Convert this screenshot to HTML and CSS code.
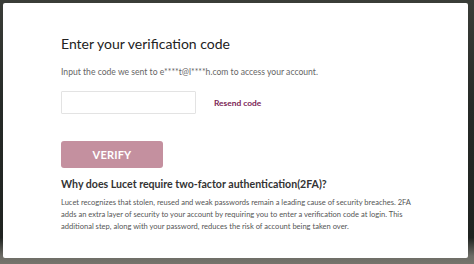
FILE: index.html
```html
<!DOCTYPE html>
<html>
<head>
<meta charset="utf-8">
<link rel="stylesheet" href="styles.css">
</head>
<body>
<div class="backdrop">
  <div class="modal">
    <h1 class="title">Enter your verification code</h1>
    <p class="sub">Input the code we sent to e****t@l****h.com to access your account.</p>
    <div class="row">
      <input class="code" type="text">
      <a class="resend">Resend code</a>
    </div>
    <button class="verify">VERIFY</button>
    <h2 class="why">Why does Lucet require two-factor authentication(2FA)?</h2>
    <p class="desc">Lucet recognizes that stolen, reused and weak passwords remain a leading cause of security breaches. 2FA adds an extra layer of security to your account by requiring you to enter a verification code at login. This additional step, along with your password, reduces the risk of account being taken over.</p>
  </div>
</div>
</body>
</html>
```
FILE: styles.css
```css
html, body { margin: 0; padding: 0; }
body {
  width: 474px; height: 264px; overflow: hidden;
  font-family: Lato, "Open Sans", sans-serif;
}
.backdrop {
  width: 474px; height: 264px; box-sizing: border-box;
  padding: 3px 6px 6px 3px;
  background: linear-gradient(180deg, #3a3d38 0%, #262a27 40%, #1f2320 90%, #6d6c66 97%, #75746c 100%);
}
.modal {
  background: #fff;
  height: 255px;
  box-sizing: border-box;
  padding: 32px 58px 0 58px;
  border-radius: 2px;
}
.title {
  margin: 0;
  font-size: 14px; font-weight: 400; color: #222;
  line-height: 18px;
}
.sub {
  margin: 13px 0 0;
  font-size: 8.6px; color: #666; line-height: 12px;
}
.row {
  display: flex; align-items: center; gap: 18px;
  margin-top: 13px;
}
.code {
  width: 135px; height: 23px; box-sizing: border-box;
  border: 1px solid #e3e3e3; border-radius: 1px; margin: 0; padding: 0;
}
.resend {
  font-size: 8.4px; font-weight: 700; color: #7b2455;
}
.verify {
  display: block;
  margin-top: 27px;
  width: 102px; height: 27px;
  border: none; border-radius: 3px;
  background: #c4909f; color: #fff;
  font-family: Lato, sans-serif; font-weight: 700; font-size: 11px;
  letter-spacing: 0.2px;
}
.why {
  margin: 10px 0 0;
  font-size: 10.6px; font-weight: 700; color: #333; line-height: 13px;
}
.desc {
  margin: 6px 0 0;
  font-size: 7.55px; color: #555; line-height: 12px;
  width: 360px;
}
```
